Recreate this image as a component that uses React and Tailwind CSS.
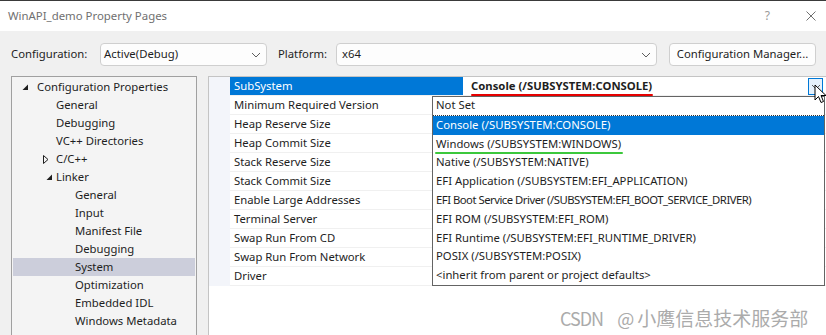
import React from "react";

const font = "font-['Noto_Sans','Liberation_Sans',sans-serif]";

const tree = [
  { label: "Configuration Properties", level: 0, toggle: "open" },
  { label: "General", level: 1 },
  { label: "Debugging", level: 1 },
  { label: "VC++ Directories", level: 1 },
  { label: "C/C++", level: 1, toggle: "closed" },
  { label: "Linker", level: 1, toggle: "open" },
  { label: "General", level: 2 },
  { label: "Input", level: 2 },
  { label: "Manifest File", level: 2 },
  { label: "Debugging", level: 2 },
  { label: "System", level: 2, selected: true },
  { label: "Optimization", level: 2 },
  { label: "Embedded IDL", level: 2 },
  { label: "Windows Metadata", level: 2 },
  { label: "Advanced", level: 2 },
];

const props = [
  "SubSystem",
  "Minimum Required Version",
  "Heap Reserve Size",
  "Heap Commit Size",
  "Stack Reserve Size",
  "Stack Commit Size",
  "Enable Large Addresses",
  "Terminal Server",
  "Swap Run From CD",
  "Swap Run From Network",
  "Driver",
];

const options = [
  "Not Set",
  "Console (/SUBSYSTEM:CONSOLE)",
  "Windows (/SUBSYSTEM:WINDOWS)",
  "Native (/SUBSYSTEM:NATIVE)",
  "EFI Application (/SUBSYSTEM:EFI_APPLICATION)",
  "EFI Boot Service Driver (/SUBSYSTEM:EFI_BOOT_SERVICE_DRIVER)",
  "EFI ROM (/SUBSYSTEM:EFI_ROM)",
  "EFI Runtime (/SUBSYSTEM:EFI_RUNTIME_DRIVER)",
  "POSIX (/SUBSYSTEM:POSIX)",
  "<inherit from parent or project defaults>",
];

function Chevron() {
  return (
    <svg width="10" height="6" viewBox="0 0 10 6" className="shrink-0">
      <path d="M1 1 L5 5 L9 1" fill="none" stroke="#5f5f5f" strokeWidth="1" />
    </svg>
  );
}

function Toggle({ kind }) {
  if (kind === "open") {
    return (
      <svg width="7" height="7" viewBox="0 0 7 7">
        <path d="M6 0.5 L6 6 L0.5 6 Z" fill="#1e1e1e" />
      </svg>
    );
  }
  return (
    <svg width="6" height="9" viewBox="0 0 6 9">
      <path d="M0.5 0.5 L5 4.5 L0.5 8.5 Z" fill="none" stroke="#1e1e1e" strokeWidth="1" />
    </svg>
  );
}

function TreeRow({ item }) {
  const textLeft = ["pl-[24px]", "pl-[43px]", "pl-[62px]"][item.level];
  const toggleLeft =
    item.label === "Linker" ? "left-[33px]" : ["left-[9px]", "left-[30px]", "left-[49px]"][item.level];
  return (
    <div
      className={`relative h-[18px] flex items-center ${textLeft} ${
        item.selected ? "bg-[#cccedb]" : ""
      }`}
    >
      {item.toggle && (
        <span className={`absolute ${toggleLeft} top-0 h-full flex items-center`}>
          <Toggle kind={item.toggle} />
        </span>
      )}
      <span className="text-[11.3px] text-[#1e1e1e] whitespace-nowrap">{item.label}</span>
    </div>
  );
}

export default function App() {
  return (
    <div className={`${font} w-[826px] h-[335px] overflow-hidden bg-[#f0f0f0] border-t border-[#3a3a3a] relative`}>
      {/* title bar */}
      <div className="h-[30px] bg-white flex items-center pl-[8px] pr-[8px]">
        <span className="text-[11.4px] text-[#707070]">WinAPI_demo Property Pages</span>
        <span className="ml-auto text-[12px] text-[#9a9a9a] mr-[36px]">?</span>
        <svg width="10" height="10" viewBox="0 0 10 10" className="mr-[2px]">
          <path d="M0.5 0.5 L9.5 9.5 M9.5 0.5 L0.5 9.5" stroke="#707070" strokeWidth="1" />
        </svg>
      </div>

      {/* configuration row */}
      <div className="flex items-center h-[23px] mt-[12px] pl-[11px]">
        <span className="text-[11.3px] text-[#1e1e1e] w-[89px]">Configuration:</span>
        <div className="w-[167px] h-[23px] bg-[#fdfdfd] border border-[#cfcfcf] rounded-[4px] flex items-center pl-[3px] pr-[5px]">
          <span className="text-[11.3px] text-[#1e1e1e]">Active(Debug)</span>
          <span className="ml-auto"><Chevron /></span>
        </div>
        <span className="text-[11.3px] text-[#1e1e1e] ml-[11px] w-[58px]">Platform:</span>
        <div className="w-[321px] h-[23px] bg-[#fdfdfd] border border-[#cfcfcf] rounded-[4px] flex items-center pl-[5px] pr-[5px]">
          <span className="text-[11.3px] text-[#1e1e1e]">x64</span>
          <span className="ml-auto"><Chevron /></span>
        </div>
        <div className="ml-[12px] w-[147px] h-[23px] bg-[#fdfdfd] border border-[#cfcfcf] rounded-[4px] flex items-center justify-center">
          <span className="text-[11.3px] text-[#1e1e1e]">Configuration Manager...</span>
        </div>
      </div>

      {/* panels */}
      <div className="flex mt-[10px] pl-[11px] gap-[11px]">
        <div className="w-[186px] h-[300px] border border-[#a0a0a0] bg-[#f4f4f4] pt-[1px] px-[1px]">
          {tree.map((item, i) => (
            <TreeRow key={i} item={item} />
          ))}
        </div>

        <div className="flex-1 h-[300px] border-l border-t border-[#c4c4c4] bg-white relative">
          <div className="flex">
            <div className="w-[21px] bg-[#f3f5fa]" />
            <div className="flex-1">
              {props.map((p, i) => (
                <div key={p} className="flex h-[19px] border-b border-[#f0f0f0]">
                  <div
                    className={`w-[233px] flex items-center pl-[4px] ${
                      i === 0 ? "bg-[#0078d7] text-white" : "text-[#1e1e1e]"
                    }`}
                  >
                    <span className="text-[11.3px] whitespace-nowrap">{p}</span>
                  </div>
                  <div className="flex-1 flex items-center pl-[8px] relative">
                    {i === 0 && (
                      <>
                        <span className="relative text-[11.3px] font-bold text-[#1e1e1e] whitespace-nowrap">
                          Console (/SUBSYSTEM:CONSOLE)
                          <span className="absolute left-0 right-[-1px] bottom-[-2px] h-[2px] bg-[#e60000] rounded" />
                        </span>
                        <div className="absolute right-[3px] top-[1px] w-[15px] h-[17px] border border-[#0078d7] bg-[#e5f1fb] flex items-center justify-center">
                          <Chevron />
                        </div>
                      </>
                    )}
                  </div>
                </div>
              ))}
            </div>
          </div>

          {/* dropdown list */}
          <div className="absolute left-[223px] top-[19px] w-[393px] border border-[#646464] bg-white">
            {options.map((o, i) => (
              <div
                key={o}
                className={`h-[18.8px] flex items-center pl-[3px] ${
                  i === 1 ? "bg-[#0078d7] text-white" : "text-[#1e1e1e]"
                } ${i === 0 ? "border-b border-dotted border-[#333]" : ""}`}
              >
                <span
                  className={`relative text-[11.3px] whitespace-nowrap ${
                    i === 5 ? "tracking-[-0.5px]" : ""
                  }`}
                >
                  {o}
                  {i === 2 && (
                    <span className="absolute left-[-1px] right-[-2px] bottom-[-2px] h-[2px] bg-[#3cc83c] rounded" />
                  )}
                </span>
              </div>
            ))}
          </div>

          {/* mouse cursor */}
          <svg
            width="14"
            height="21"
            viewBox="0 0 14 21"
            className="absolute left-[605px] top-[7px]"
          >
            <path
              d="M1 1 L1 16 L4.5 12.5 L7 18.5 L9.5 17.5 L7 11.5 L12 11.5 Z"
              fill="white"
              stroke="black"
              strokeWidth="1"
              strokeLinejoin="round"
            />
          </svg>
        </div>
      </div>

      {/* watermark */}
      <div className="absolute left-[560px] top-[307px] flex items-baseline text-[#ababab] font-['Noto_Sans_CJK_SC',sans-serif] whitespace-nowrap leading-none">
        <span className="text-[18px] tracking-[-1px]">CSDN</span>
        <span className="text-[18px] ml-[14px]">@</span>
        <span className="text-[19px] ml-[3px]">小鹰信息技术服务部</span>
      </div>
    </div>
  );
}
